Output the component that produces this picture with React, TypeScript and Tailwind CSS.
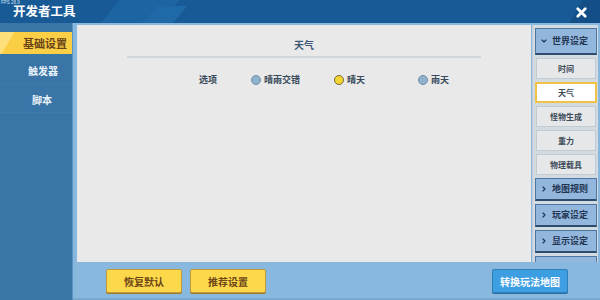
import React from "react";
import { ChevronDown, ChevronRight, X } from "lucide-react";

const font = { fontFamily: '"Noto Sans CJK SC", "Noto Sans", sans-serif' };

function Radio({ on }: { on?: boolean }) {
  return (
    <span
      className={
        "inline-block w-[10px] h-[10px] rounded-full border " +
        (on ? "bg-[#f7d531] border-[#7a6a3a]" : "bg-[#8fb3cf] border-[#6e8ea8]")
      }
    />
  );
}

function SubItem({ label, active }: { label: string; active?: boolean }) {
  return (
    <div
      className={
        "shrink-0 h-[21px] flex items-center justify-center text-[8px] font-bold text-[#3d4a58] " +
        (active
          ? "bg-white border-2 border-[#f0c245]"
          : "bg-[#e6e7e8] border border-[#c3cad2] mx-[1px]")
      }
    >
      {label}
    </div>
  );
}

function Group({ label, open, tall }: { label: string; open?: boolean; tall?: boolean }) {
  return (
    <div
      className={
        "shrink-0 flex items-center gap-[4px] pl-[4px] bg-[#93b6dc] border border-[#4f76a0] border-b-2 border-b-[#2d4c6e] text-[9px] font-bold text-[#1f3552] " +
        (tall ? "h-[27px]" : "h-[23px]")
      }
    >
      {label &&
        (open ? (
          <ChevronDown size={8} strokeWidth={3.5} color="#1f3552" />
        ) : (
          <ChevronRight size={8} strokeWidth={3.5} color="#1f3552" />
        ))}
      <span>{label}</span>
    </div>
  );
}

export default function App() {
  return (
    <div className="w-[600px] h-[300px] flex flex-col overflow-hidden" style={font}>
      {/* Header */}
      <div className="relative h-[23px] bg-[#185a96] flex items-center shrink-0 overflow-hidden">
        <div className="absolute left-[110px] top-0 w-[60px] h-[23px] bg-[#1d64a3] -skew-x-[40deg]" />
        <div className="absolute left-[150px] top-[6px] w-[30px] h-[17px] bg-[#2069a8] -skew-x-[40deg]" />
        <div className="absolute right-0 top-0 w-[30px] h-[23px] bg-[#134f86] -skew-x-[30deg] translate-x-[6px]" />
        <div className="absolute left-[1px] top-0 text-[4.5px] leading-[5.2px] text-[#cfe0f0] font-['Liberation_Sans',sans-serif]">
          FPS 28.9
        </div>
        <div className="relative ml-[13px] mt-[2px] text-[12.5px] font-bold text-white leading-none font-['Liberation_Sans','Noto_Sans_CJK_SC',sans-serif]">
          开发者工具
        </div>
        <div className="relative ml-auto mr-[11px] mt-[1px]">
          <X size={15} strokeWidth={4.5} color="#ffffff" />
        </div>
      </div>

      <div className="flex flex-1 min-h-0">
        {/* Sidebar */}
        <div className="w-[72px] bg-[#3a75a7] flex flex-col pt-[9px] shrink-0">
          <div className="relative h-[22px] bg-[#fbcf45] flex items-center justify-end pr-[5px] overflow-hidden">
            <div className="absolute left-[-6px] top-0 w-[14px] h-[22px] bg-[#fde07a] -skew-x-[30deg]" />
            <span className="relative text-[11px] font-bold text-[#6a4417]">基础设置</span>
          </div>
          <div className="h-[30px] flex items-center justify-center pl-[14px] pt-[4px] text-[10px] font-bold text-[#eaf2fa] border-b border-[#3f7aac]">
            触发器
          </div>
          <div className="h-[29px] flex items-center justify-center pl-[12px] pt-[2px] text-[10px] font-bold text-[#eaf2fa] border-b border-[#3f7aac]">
            脚本
          </div>
        </div>

        {/* Main */}
        <div className="flex-1 bg-[#89b8de] flex flex-col border-l border-[#5d93c2]">
          <div className="flex h-[239px] pt-[2px] pl-[4px] pr-[2px]">
            {/* Content panel */}
            <div className="w-[454px] bg-[#e9e9e9] flex flex-col items-center">
              <div className="mt-[15px] text-[10px] font-bold text-[#3c5875] leading-none">天气</div>
              <div className="mt-[6px] w-[354px] h-[2px] bg-[#d3d8dd]" />
              <div className="w-full flex items-center mt-[15px] text-[9px] font-bold text-[#38495a]">
                <span className="ml-[122px] w-[52px]">选项</span>
                <span className="flex items-center gap-[3px] w-[83px]">
                  <Radio />
                  晴雨交错
                </span>
                <span className="flex items-center gap-[3px] w-[84px]">
                  <Radio on />
                  晴天
                </span>
                <span className="flex items-center gap-[3px]">
                  <Radio />
                  雨天
                </span>
              </div>
            </div>
            {/* Right panel */}
            <div className="flex-1 ml-[1px] bg-[#d2dae2] border-l border-[#c3ccd6] pl-[2px] pr-[1px] pt-[3px] flex flex-col gap-[3px] overflow-hidden">
              <Group label="世界设定" open tall />
              <SubItem label="时间" />
              <SubItem label="天气" active />
              <SubItem label="怪物生成" />
              <SubItem label="重力" />
              <SubItem label="物理载具" />
              <Group label="地图规则" />
              <Group label="玩家设定" />
              <Group label="显示设定" />
              <Group label="" />
            </div>
          </div>

          {/* Bottom bar */}
          <div className="flex-1 flex items-start pt-[7px] pl-[33px] pr-[32px] border-b-2 border-[#7aa9cf]">
            <button className="w-[76px] h-[24px] bg-[#fdd84b] border border-[#c09a3c] rounded-[2px] shadow-[0_1px_0_#9c7a2c] text-[10px] font-bold text-[#6a4516]">
              恢复默认
            </button>
            <button className="ml-[8px] w-[76px] h-[24px] bg-[#fdd84b] border border-[#c09a3c] rounded-[2px] shadow-[0_1px_0_#9c7a2c] text-[10px] font-bold text-[#6a4516]">
              推荐设置
            </button>
            <button className="ml-auto w-[76px] h-[24px] bg-[#3d9ee2] border border-[#2f7fb9] rounded-[2px] shadow-[0_1px_0_#2a6d9e] text-[10px] font-bold text-white">
              转换玩法地图
            </button>
          </div>
        </div>
      </div>
    </div>
  );
}
